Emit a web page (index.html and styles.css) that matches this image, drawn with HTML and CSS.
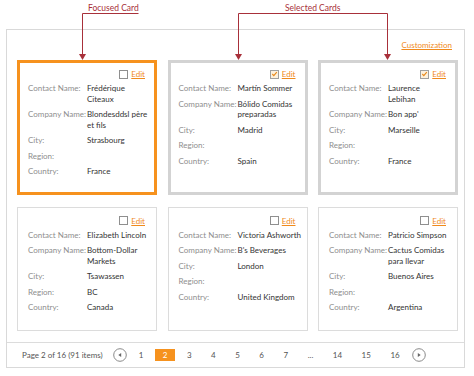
FILE: index.html
```html
<!DOCTYPE html>
<html>
<head>
<meta charset="utf-8">
<link rel="stylesheet" href="styles.css">
</head>
<body>
<div class="annot">
  <span class="annot-label focused-label">Focused Card</span>
  <span class="annot-label selected-label">Selected Cards</span>
  <svg class="annot-lines" width="474" height="62" viewBox="0 0 474 62">
    <polyline points="138.5,13.5 82.5,13.5 82.5,55" fill="none" stroke="#a8303a" stroke-width="1"/>
    <polygon points="79,54 86,54 82.5,60" fill="#a8303a"/>
    <polyline points="238.5,55 238.5,13.5 387.5,13.5 387.5,55" fill="none" stroke="#a8303a" stroke-width="1"/>
    <polygon points="235,54 242,54 238.5,60" fill="#a8303a"/>
    <polygon points="384,54 391,54 387.5,60" fill="#a8303a"/>
  </svg>
</div>
<div class="view">
  <div class="toolbar"><a class="link" href="#">Customization</a></div>
  <div class="grid">
    <div class="card focused">
      <div class="card-head"><span class="chk"></span><a class="link" href="#">Edit</a></div>
      <div class="fields">
        <span class="lbl">Contact Name:</span><span class="val">Frédérique<br>Citeaux</span>
        <span class="lbl">Company Name:</span><span class="val">Blondesddsl père<br>et fils</span>
        <span class="lbl">City:</span><span class="val">Strasbourg</span>
        <span class="lbl">Region:</span><span class="val"></span>
        <span class="lbl">Country:</span><span class="val">France</span>
      </div>
    </div>
    <div class="card selected">
      <div class="card-head"><span class="chk checked"><svg width="8" height="8" viewBox="0 0 8 8"><polyline points="1.5,4 3.2,5.8 6.6,1.8" fill="none" stroke="#e8891a" stroke-width="1.3"/></svg></span><a class="link" href="#">Edit</a></div>
      <div class="fields">
        <span class="lbl">Contact Name:</span><span class="val">Martín Sommer</span>
        <span class="lbl">Company Name:</span><span class="val">Bólido Comidas<br>preparadas</span>
        <span class="lbl">City:</span><span class="val">Madrid</span>
        <span class="lbl">Region:</span><span class="val"></span>
        <span class="lbl">Country:</span><span class="val">Spain</span>
      </div>
    </div>
    <div class="card selected">
      <div class="card-head"><span class="chk checked"><svg width="8" height="8" viewBox="0 0 8 8"><polyline points="1.5,4 3.2,5.8 6.6,1.8" fill="none" stroke="#e8891a" stroke-width="1.3"/></svg></span><a class="link" href="#">Edit</a></div>
      <div class="fields">
        <span class="lbl">Contact Name:</span><span class="val">Laurence<br>Lebihan</span>
        <span class="lbl">Company Name:</span><span class="val">Bon app'</span>
        <span class="lbl">City:</span><span class="val">Marseille</span>
        <span class="lbl">Region:</span><span class="val"></span>
        <span class="lbl">Country:</span><span class="val">France</span>
      </div>
    </div>
    <div class="card">
      <div class="card-head"><span class="chk"></span><a class="link" href="#">Edit</a></div>
      <div class="fields">
        <span class="lbl">Contact Name:</span><span class="val">Elizabeth Lincoln</span>
        <span class="lbl">Company Name:</span><span class="val">Bottom-Dollar<br>Markets</span>
        <span class="lbl">City:</span><span class="val">Tsawassen</span>
        <span class="lbl">Region:</span><span class="val">BC</span>
        <span class="lbl">Country:</span><span class="val">Canada</span>
      </div>
    </div>
    <div class="card">
      <div class="card-head"><span class="chk"></span><a class="link" href="#">Edit</a></div>
      <div class="fields">
        <span class="lbl">Contact Name:</span><span class="val">Victoria Ashworth</span>
        <span class="lbl">Company Name:</span><span class="val">B's Beverages</span>
        <span class="lbl">City:</span><span class="val">London</span>
        <span class="lbl">Region:</span><span class="val"></span>
        <span class="lbl">Country:</span><span class="val">United Kingdom</span>
      </div>
    </div>
    <div class="card">
      <div class="card-head"><span class="chk"></span><a class="link" href="#">Edit</a></div>
      <div class="fields">
        <span class="lbl">Contact Name:</span><span class="val">Patricio Simpson</span>
        <span class="lbl">Company Name:</span><span class="val">Cactus Comidas<br>para llevar</span>
        <span class="lbl">City:</span><span class="val">Buenos Aires</span>
        <span class="lbl">Region:</span><span class="val"></span>
        <span class="lbl">Country:</span><span class="val">Argentina</span>
      </div>
    </div>
  </div>
  <div class="pager">
    <span class="summary">Page 2 of 16 (91 items)</span>
    <span class="nav prev"><svg width="14" height="14" viewBox="0 0 14 14"><circle cx="7" cy="7" r="6.3" fill="#fff" stroke="#8a8a8a" stroke-width="1"/><polygon points="5.3,7 8.2,5 8.2,9" fill="#666"/></svg></span>
    <span class="pages">
      <span class="pg">1</span>
      <span class="pg current">2</span>
      <span class="pg">3</span>
      <span class="pg">4</span>
      <span class="pg">5</span>
      <span class="pg">6</span>
      <span class="pg">7</span>
      <span class="pg ellipsis">...</span>
      <span class="pg">14</span>
      <span class="pg">15</span>
      <span class="pg">16</span>
    </span>
    <span class="nav next"><svg width="14" height="14" viewBox="0 0 14 14"><circle cx="7" cy="7" r="6.3" fill="#fff" stroke="#8a8a8a" stroke-width="1"/><polygon points="8.7,7 5.8,5 5.8,9" fill="#666"/></svg></span>
  </div>
</div>
</body>
</html>
```
FILE: styles.css
```css
html, body {
  margin: 0;
  padding: 0;
  background: #ffffff;
}
body {
  font-family: Lato, "Liberation Sans", sans-serif;
  font-size: 8px;
  color: #333;
  position: relative;
  width: 474px;
  height: 376px;
  overflow: hidden;
}
.annot {
  position: absolute;
  left: 0;
  top: 0;
  width: 474px;
  height: 62px;
  pointer-events: none;
  z-index: 5;
}
.annot-lines {
  position: absolute;
  left: 0;
  top: 0;
}
.annot-label {
  position: absolute;
  top: 3px;
  font-size: 8.5px;
  line-height: 10px;
  color: #a8303a;
  white-space: nowrap;
}
.focused-label { left: 88px; }
.selected-label { left: 285px; }

.view {
  box-sizing: border-box;
  margin: 29px 0 0 6px;
  width: 459px;
  height: 339px;
  border: 1px solid #d9d9d9;
  display: flex;
  flex-direction: column;
}
.toolbar {
  height: 30px;
  display: flex;
  align-items: center;
  justify-content: flex-end;
  padding-right: 12px;
}
.link {
  color: #f08a1c;
  text-decoration: underline;
  line-height: 10px;
}
.grid {
  display: grid;
  grid-template-columns: repeat(3, 140px);
  column-gap: 10.5px;
  row-gap: 12px;
  padding-left: 10px;
}
.card {
  box-sizing: border-box;
  border: 1px solid #dcdcdc;
  padding: 8px 6px 17px 10px;
}
.card.selected {
  border: 3px solid #d3d3d3;
  padding: 6px 4px 15px 8px;
}
.card.focused {
  border: 3px solid #f6921e;
  padding: 6px 4px 15px 8px;
}
.card-head {
  height: 10px;
  display: flex;
  align-items: center;
  justify-content: flex-end;
  gap: 3px;
  padding-right: 5px;
  margin-bottom: 4px;
}
.chk {
  box-sizing: border-box;
  width: 9px;
  height: 9px;
  border: 1px solid #8f8f8f;
  background: #fff;
  display: flex;
  align-items: center;
  justify-content: center;
}
.chk.checked {
  background: #fdf1de;
  border-color: #a0a0a0;
}
.chk svg { display: block; }
.fields {
  display: grid;
  grid-template-columns: 59px 1fr;
  row-gap: 5px;
  line-height: 10.5px;
}
.lbl {
  color: #8e8e8e;
  white-space: nowrap;
}
.val {
  color: #333;
  white-space: nowrap;
}
.pager {
  margin-top: auto;
  height: 24px;
  border-top: 1px solid #dcdcdc;
  display: flex;
  align-items: center;
  padding-left: 15px;
  color: #555;
}
.summary {
  margin-right: 10px;
  color: #555;
}
.nav svg { display: block; }
.nav.prev { margin-right: 4px; }
.nav.next { margin-left: 4px; }
.pages {
  display: flex;
  align-items: center;
  gap: 3.5px;
}
.pg {
  padding: 0 8px;
  height: 12px;
  line-height: 12px;
  color: #555;
}
.pg.current {
  background: #f6921e;
  color: #fff;
}
```
